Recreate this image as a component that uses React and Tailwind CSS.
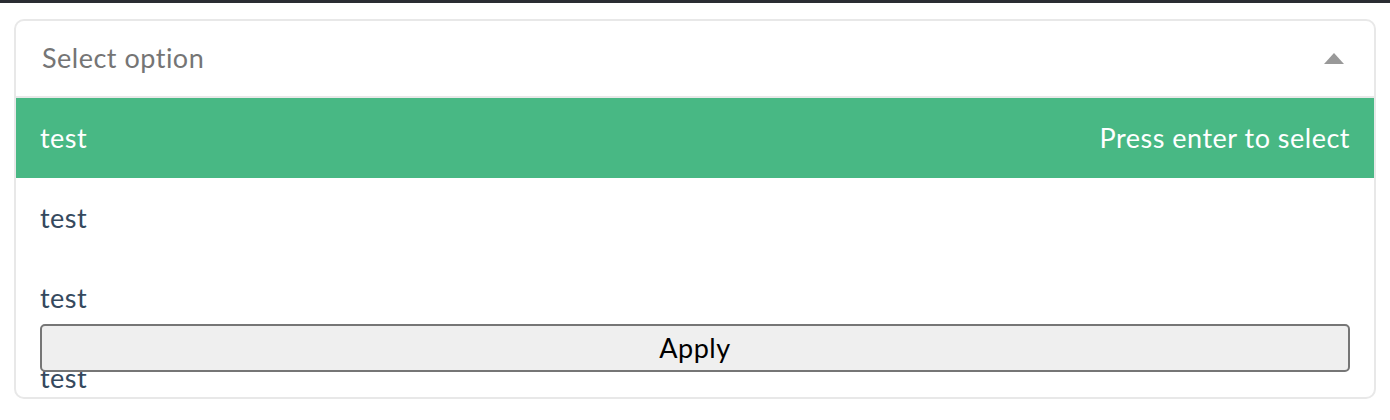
export default function App() {
  const font = { fontFamily: 'Lato, "Noto Sans", sans-serif' };
  return (
    <div className="w-[1390px] h-[420px] bg-white overflow-hidden" style={font}>
      <div className="h-[3px] bg-[#2a2d33]" />
      <div className="mx-[14px] mt-[16px] h-[380px] rounded-[10px] border-2 border-[#e8e8e8] overflow-hidden relative tracking-[0.5px]">
        <div className="h-[77px] border-b-2 border-[#e8e8e8] flex items-center justify-between pl-[26px] pr-[30px]">
          <span className="text-[27px] text-[#757575]">Select option</span>
          <svg width="20" height="12" viewBox="0 0 20 12">
            <polygon points="10,0 20,11 0,11" fill="#999999" />
          </svg>
        </div>
        <div className="flex flex-col">
          <div className="h-[80px] shrink-0 bg-[#48b884] text-white flex items-center justify-between px-[24px] text-[27px]">
            <span>test</span>
            <span>Press enter to select</span>
          </div>
          <div className="h-[80px] shrink-0 flex items-center px-[24px] text-[27px] text-[#35495e]">test</div>
          <div className="h-[80px] shrink-0 flex items-center px-[24px] text-[27px] text-[#35495e]">test</div>
          <div className="h-[80px] shrink-0 flex items-center px-[24px] text-[27px] text-[#35495e]">test</div>
        </div>
        <button className="absolute left-[24px] right-[24px] top-[303px] h-[48px] bg-[#efefef] border-2 border-[#767676] rounded-[5px] text-[27px] text-black flex items-center justify-center">
          Apply
        </button>
      </div>
    </div>
  );
}
